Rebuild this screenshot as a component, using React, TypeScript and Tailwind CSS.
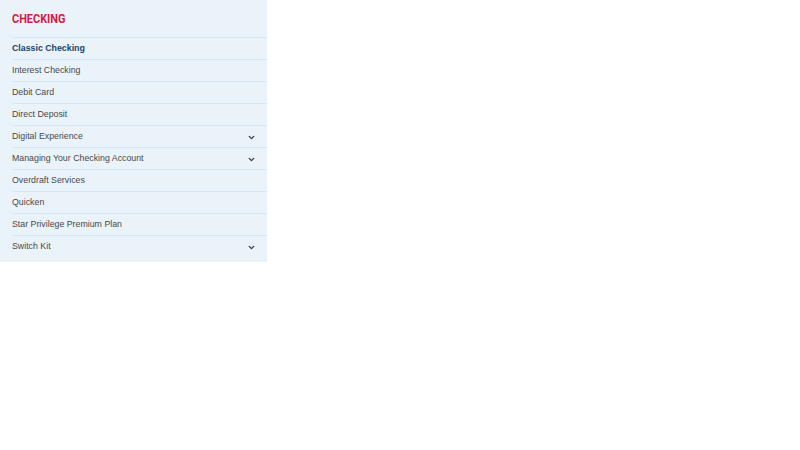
import { ChevronDown } from 'lucide-react';

type NavItem = { label: string; active?: boolean; children?: boolean };

const items: NavItem[] = [
  { label: 'Classic Checking', active: true },
  { label: 'Interest Checking' },
  { label: 'Debit Card' },
  { label: 'Direct Deposit' },
  { label: 'Digital Experience', children: true },
  { label: 'Managing Your Checking Account', children: true },
  { label: 'Overdraft Services' },
  { label: 'Quicken' },
  { label: 'Star Privilege Premium Plan' },
  { label: 'Switch Kit', children: true },
];

export default function App() {
  return (
    <div className="w-[800px] h-[450px] bg-white font-['Liberation_Sans',Arial,sans-serif]">
      <aside className="w-[267px] bg-[#ebf3fa] pl-3 pb-[5px]">
        {/* heading */}
        <div className="h-[37px] flex items-center">
          <h2 className="font-['Roboto',sans-serif] font-bold text-[13px] text-[#cf1c45] uppercase origin-left scale-x-[0.84] leading-none">
            Checking
          </h2>
        </div>
        <ul>
          {items.map((item) => (
            <li
              key={item.label}
              className="h-[22px] border-t border-[#d9e5f0] flex items-center justify-between pr-[11px] pt-[1px]"
            >
              <a
                href="#"
                className={
                  item.active
                    ? 'text-[8.8px] font-bold text-[#17456e]'
                    : 'text-[8.8px] text-[#484848]'
                }
              >
                {item.label}
              </a>
              {item.children && (
                <ChevronDown className="w-[9px] h-[9px] text-[#333]" strokeWidth={3.5} />
              )}
            </li>
          ))}
        </ul>
      </aside>
    </div>
  );
}
